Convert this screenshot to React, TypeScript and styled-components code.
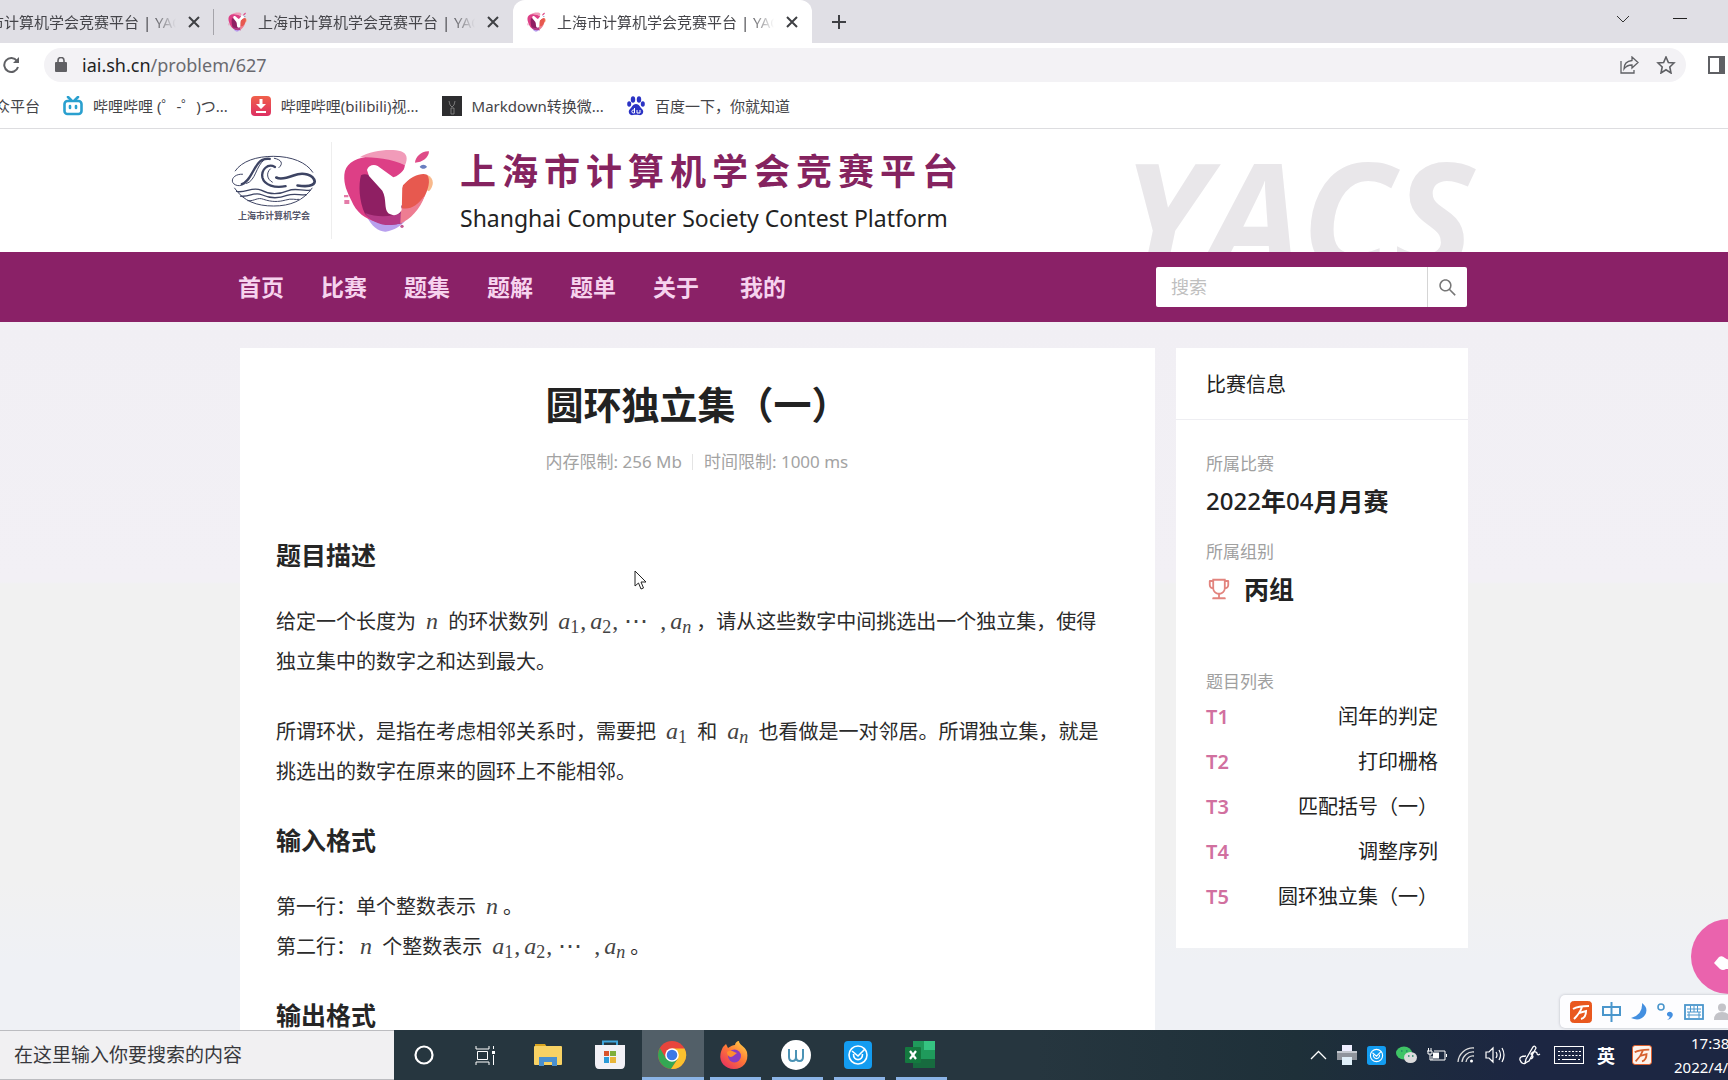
import React from "react";
import styled, { createGlobalStyle, css } from "styled-components";
import { AiOutlineSearch, AiOutlineTrophy } from "react-icons/ai";

const SANS = `"Noto Sans", "Noto Sans CJK SC", sans-serif`;

const GlobalStyle = createGlobalStyle`
  * { box-sizing: border-box; }
  body { margin: 0; background: #f1f0f3; font-family: ${SANS}; color: #262626; overflow: hidden; }
  button { font: inherit; color: inherit; border: 0; padding: 0; background: none; }
  h1, h2, h3, p, dl, dd, ul { margin: 0; padding: 0; }
  a { color: inherit; text-decoration: none; }
  svg { display: block; flex: none; }
`;

const Screen = styled.div`
  height: 100vh;
  display: flex;
  flex-direction: column;
  overflow: hidden;
`;

/* ---------- Browser ---------- */

const TabStrip = styled.div`
  flex: none;
  height: 43px;
  display: flex;
  align-items: stretch;
  background: #e0dfe5;
  overflow: hidden;
`;

const Tabs = styled.div`
  display: flex;
  margin-left: -85px;
`;

const Tab = styled.div<{ $active?: boolean }>`
  width: 299px;
  display: flex;
  align-items: center;
  padding: 0 13px 0 14px;
  border-right: 1px solid transparent;
  ${(p) => p.$active && css`
    background: #fff;
    border-radius: 12px 12px 0 0;
  `}
  &:first-child {
    border-image: linear-gradient(transparent 22%, #a5a4aa 22% 80%, transparent 80%) 1;
  }
`;

const TabTitle = styled.button`
  flex: 1;
  min-width: 0;
  margin: 0 12px 0 11px;
  overflow: hidden;
  white-space: nowrap;
  text-align: left;
  font-size: 15px;
  line-height: 24px;
  color: #45454a;
  mask-image: linear-gradient(90deg, #000 88%, transparent);
`;

const IconButton = styled.button`
  display: flex;
  align-items: center;
  justify-content: center;
  flex: none;
  color: #3f4044;
`;

const NewTab = styled(IconButton)`
  width: 54px;
`;

const WindowControls = styled.div`
  display: flex;
  align-items: center;
  gap: 43px;
  margin-left: auto;
  padding: 0 41px 6px 0;
`;

const Toolbar = styled.div`
  flex: none;
  height: 43px;
  display: flex;
  align-items: center;
  background: #fff;
  padding: 0 3px;
`;

const Omnibox = styled.div`
  flex: 1;
  height: 34px;
  margin: 0 22px 0 24px;
  padding: 0 8px 0 11px;
  display: flex;
  align-items: center;
  gap: 15px;
  border-radius: 17px;
  background: #f3f2f5;
`;

const Address = styled.div`
  flex: 1;
  font-size: 18px;
  line-height: 26px;
  color: #6a6a70;
  b { font-weight: 400; color: #222; }
`;

const Bookmarks = styled.nav`
  flex: none;
  height: 43px;
  display: flex;
  align-items: center;
  gap: 23px;
  padding-bottom: 3px;
  background: #fff;
  border-bottom: 1px solid #dddde0;
  a {
    display: flex;
    align-items: center;
    gap: 10px;
    font-size: 15px;
    line-height: 24px;
    white-space: nowrap;
    color: #444448;
  }
  a:first-child { margin-left: -5px; }
`;

/* ---------- Site ---------- */

const Viewport = styled.div`
  flex: 1;
  min-height: 0;
  overflow: hidden;
`;

const Masthead = styled.header`
  height: 123px;
  padding: 0 254px 0 230px;
  display: flex;
  background: #fff;
  overflow: hidden;
`;

const Society = styled.div`
  align-self: center;
  height: 97px;
  padding: 13px 13px 0 0;
  border-right: 1px solid #eee;
  display: flex;
  flex-direction: column;
  align-items: center;
  span {
    font-family: "Liberation Serif", "Noto Sans CJK SC", serif;
    font-size: 9px;
    font-weight: 700;
    line-height: 16px;
    color: #55566a;
  }
`;

const Emblem = styled.div`
  align-self: center;
  margin: 0 26px 0 10px;
`;

const Brand = styled.div`
  padding-top: 18px;
  white-space: nowrap;
  h1 {
    font-size: 36px;
    line-height: 50px;
    letter-spacing: 6px;
    font-weight: 700;
    color: #85235f;
  }
  p {
    font-size: 23px;
    line-height: 42px;
    color: #222;
  }
`;

const Watermark = styled.div`
  margin-left: auto;
  font-family: "Open Sans", "Noto Sans", sans-serif;
  font-size: 151px;
  line-height: 170px;
  font-style: italic;
  font-weight: 700;
  color: #e9e7ea;
`;

const NavBar = styled.nav`
  height: 70px;
  padding: 0 261px 0 238px;
  display: flex;
  align-items: center;
  background: #8a2167;
`;

const NavLinks = styled.div`
  display: flex;
  gap: 36px;
  a {
    min-width: 47px;
    font-size: 23px;
    line-height: 38px;
    font-weight: 700;
    color: #f6d3ee;
  }
  a:last-child { margin-left: 4px; }
`;

const SearchForm = styled.form`
  margin-left: auto;
  width: 311px;
  height: 40px;
  display: flex;
  border-radius: 2px;
  background: #fff;
  overflow: hidden;
  input {
    flex: 1;
    min-width: 0;
    border: 0;
    padding: 0 15px;
    background: none;
    font: 18px/26px ${SANS};
    outline: 0;
  }
  input::placeholder { color: #bfbfbf; }
  button {
    width: 40px;
    display: flex;
    align-items: center;
    justify-content: center;
    border-left: 1px solid #d5d5d5;
    color: #777;
  }
`;

const Columns = styled.main`
  padding: 26px 260px 0 240px;
  display: flex;
  align-items: flex-start;
  gap: 21px;
  background: linear-gradient(#f1eff4, #f2f0f5 260px, #f1f1f1 262px, #f1f1f1 560px, #eff1f5 640px);
`;

const Problem = styled.article`
  flex: 1;
  min-width: 0;
  padding: 29px 36px 40px;
  background: #fff;
  display: flex;
  flex-direction: column;
  gap: 30px;
`;

const ProblemHead = styled.header`
  align-self: center;
  margin-bottom: 31px;
  h2 {
    font-size: 38px;
    line-height: 54px;
    font-weight: 700;
    color: #222;
  }
`;

const Limits = styled.div`
  margin-top: 17px;
  display: flex;
  align-items: center;
  font-size: 17px;
  line-height: 28px;
  white-space: nowrap;
  color: #a3a3a3;
  span + span {
    margin-left: 10px;
    padding-left: 12px;
    background: linear-gradient(#e4e4e4, #e4e4e4) left center / 1px 16px no-repeat;
  }
`;

const Section = styled.section`
  padding-right: 14px;
  h3 {
    margin-bottom: 29px;
    font-size: 25px;
    line-height: 36px;
    font-weight: 700;
    color: #262626;
  }
  p {
    font-size: 20px;
    line-height: 40px;
    color: #2b2b2b;
  }
  p + p.spaced { margin-top: 30px; }
`;

const Formula = styled.span<{ $tight?: boolean }>`
  margin: 0 5px 0 ${(p) => (p.$tight ? 4 : 10)}px;
  line-height: 30px;
  font-family: "Liberation Serif", serif;
  font-size: 24px;
  color: #444;
  white-space: nowrap;
  sub {
    font-size: 18px;
    line-height: 0;
    vertical-align: -4px;
  }
`;

const Comma = styled.span`
  margin: 0 4px 0 1px;
`;

const Dots = styled.span`
  margin: 0 11px 0 2px;
`;

const SideCard = styled.aside`
  flex: none;
  width: 292px;
  padding-bottom: 29px;
  background: #fff;
  h2 {
    height: 72px;
    padding: 0 30px;
    font-size: 20px;
    line-height: 73px;
    font-weight: 400;
    border-bottom: 1px solid #eeeef2;
    color: #222;
  }
`;

const Facts = styled.dl`
  padding: 31px 30px 0;
  dt {
    font-size: 17px;
    line-height: 26px;
    color: #a0a0a0;
  }
  dd {
    margin: 6px 0 20px;
    display: flex;
    align-items: center;
    font-size: 25px;
    line-height: 36px;
    font-weight: 700;
    color: #222;
  }
  dd svg { margin-right: 12px; color: #e2847e; }
  dd span { font-size: 24px; font-weight: 500; }
`;

const TaskList = styled.section`
  padding: 42px 30px 0;
  h3 {
    font-size: 17px;
    line-height: 25px;
    font-weight: 400;
    color: #a0a0a0;
  }
  ul { list-style: none; }
  li a {
    display: flex;
    justify-content: space-between;
    font-size: 20px;
    line-height: 45px;
    color: #222;
  }
  b { font-weight: 600; color: #d1709f; }
`;

/* ---------- Desktop ---------- */

const Taskbar = styled.footer`
  flex: none;
  height: 50px;
  display: flex;
  background: linear-gradient(90deg, #26363f 60%, #1e3039 75%, #1c2642 88%);
  color: #fff;
`;

const DesktopSearch = styled.input`
  width: 394px;
  padding: 0 0 0 14px;
  border: 1px solid #bcbcc0;
  border-width: 1px 0;
  background: #f1f0f2;
  font: 19px/28px ${SANS};
  outline: 0;
  &::placeholder { color: #38383c; opacity: 1; }
`;

const TaskButton = styled.button<{ $running?: boolean; $front?: boolean }>`
  width: 62px;
  height: 50px;
  padding-right: 2px;
  display: flex;
  align-items: center;
  justify-content: center;
  background:
    linear-gradient(#8bb4e6, #8bb4e6) center bottom / ${(p) => (p.$front ? "100%" : p.$running ? "51px" : "0")} 3px no-repeat,
    ${(p) => (p.$front ? "#525f68" : "transparent")};
`;

const Tray = styled.div`
  margin-left: auto;
  display: flex;
  align-items: center;
  gap: 13px;
  padding-right: 22px;
  font-size: 18px;
  font-weight: 700;
  > span { margin-right: 4px; }
`;

const TrayGroup = styled.div`
  display: flex;
  align-items: center;
  gap: 10px;
`;

const Clock = styled.time`
  width: 54px;
  display: flex;
  flex-direction: column;
  justify-content: center;
  font-size: 15px;
  line-height: 24px;
  white-space: nowrap;
  span:first-child { padding-left: 17px; }
`;

const ImeBar = styled.div`
  position: fixed;
  right: 0;
  bottom: 52px;
  width: 168px;
  height: 33px;
  padding-left: 10px;
  display: flex;
  align-items: center;
  gap: 10px;
  border-radius: 5px 0 0 5px;
  background: #fdfdff;
  box-shadow: 0 0 3px #b9bbc4;
  overflow: hidden;
  color: #4a96cc;
`;

const ChatBubble = styled.button`
  position: fixed;
  right: -38px;
  bottom: 86px;
  width: 75px;
  height: 75px;
  padding-top: 12px;
  display: flex;
  align-items: center;
  justify-content: center;
  border-radius: 50%;
  background: #ea63ad;
`;

const Pointer = styled.div`
  position: fixed;
  left: 634px;
  top: 570px;
`;

/* ---------- Drawings ---------- */

const YacsMark = ({ width, height }: { width: number; height: number }) => (
  <svg width={width} height={height} viewBox="351 10 276 255" preserveAspectRatio="none" aria-hidden="true">
    <path d="M425 215C440 245 460 262 482 261C510 257 525 245 540 230Z" fill="#b9a0ee" />
    <path d="M606 90C626 98 630 120 612 140L590 130Z" fill="#f8b98c" />
    <path d="M358 90C360 60 385 42 425 36C470 34 510 45 540 60C535 90 520 130 500 170L455 232C420 222 395 205 378 165C366 140 356 120 358 90Z" fill="#dd3f86" />
    <path d="M404 38C440 16 500 12 528 20C545 26 550 40 540 62C500 42 450 38 404 38Z" fill="#f19bb9" />
    <path d="M408 92C425 80 450 100 490 130L535 190L530 236C490 246 450 238 420 208C402 170 400 120 408 92Z" fill="#8f1f63" />
    <path d="M420 205C460 220 500 215 530 205L530 236C490 246 448 244 420 205Z" fill="#b43a86" />
    <path d="M532 118C560 95 590 82 606 90C618 105 610 135 596 160C580 190 560 212 530 212Z" fill="#e7594f" />
    <path d="M528 190C555 196 572 188 600 152C585 195 555 225 526 237Z" fill="#ee7d92" />
    <path d="M426 76C430 62 446 58 458 64L505 98C530 90 542 68 548 52L592 74C572 88 550 104 534 122C524 145 528 170 530 196C522 212 506 216 490 206C476 190 486 165 472 138L432 94Z" fill="#fff" />
    <path d="M570 54C570 38 590 18 612 20C612 38 592 54 570 54Z" fill="#df4b88" />
    <path d="M584 66C590 58 600 58 606 66C600 74 590 74 584 66Z" fill="#6a7fc0" />
    <path d="M357 151H370V158H357ZM358 166H373V178H358Z" fill="#e47ba8" />
    <circle cx="531" cy="245" r="5" fill="#c35a92" />
  </svg>
);

const SocietyMark = () => (
  <svg width="88" height="53" viewBox="15 30 264 160" fill="none" stroke="#3d4463" strokeLinecap="round" aria-hidden="true">
    <path d="M30 78C50 48 95 34 145 34C200 34 245 52 264 82" strokeWidth="3" />
    <path d="M52 88C20 86 10 116 36 122C44 124 54 120 60 116M28 130C55 170 95 184 146 184C196 184 236 168 262 130" strokeWidth="3" />
    <path d="M50 118C76 110 84 68 104 50C112 42 126 40 134 42" strokeWidth="7" />
    <path d="M64 116C92 108 92 64 116 46" strokeWidth="3" />
    <path d="M150 66C128 54 108 74 112 98C118 122 150 130 182 124" strokeWidth="7" />
    <path d="M148 40C170 44 176 56 162 68M136 72C122 84 126 104 142 112" strokeWidth="3" />
    <path d="M154 98C168 106 190 98 206 92C236 80 266 90 270 110C268 124 246 126 218 122" strokeWidth="8" />
    <path d="M34 140C62 146 80 124 108 136C134 150 160 150 188 138C214 128 232 140 256 136" strokeWidth="4" />
    <path d="M46 154C74 158 86 140 110 150C136 162 160 162 186 152C208 144 226 152 244 150" strokeWidth="4" />
    <path d="M68 168C90 170 96 156 116 164C140 172 160 172 182 166C200 160 212 166 222 164" strokeWidth="3" />
  </svg>
);

const CloseX = () => (
  <svg width="12" height="12" viewBox="0 0 12 12" stroke="currentColor" strokeWidth="2"><path d="M1 1L11 11M11 1L1 11" /></svg>
);

const BiliIcon = () => (
  <svg width="20" height="20" viewBox="0 0 20 20" fill="none" stroke="#2aa0cf" strokeWidth="2.6" strokeLinecap="round">
    <rect x="1.5" y="5" width="17" height="13" rx="3" /><path d="M5 1L8 4M15 1L12 4M7 10V12M13 10V12" />
  </svg>
);

const DownloadIcon = () => (
  <svg width="20" height="20" viewBox="0 0 20 20">
    <defs><linearGradient id="dl" x2="0" y2="1"><stop stopColor="#f0604a" /><stop offset="1" stopColor="#dd2f62" /></linearGradient></defs>
    <rect width="20" height="20" rx="4" fill="url(#dl)" />
    <path d="M8.500 3H11.500V8H15L10 13L5 8H8.500ZM5 15H15V17H5Z" fill="#fff" />
  </svg>
);

const DeerIcon = () => (
  <svg width="20" height="20" viewBox="0 0 20 20">
    <rect width="20" height="20" fill="#2d2d2f" />
    <path d="M7 5L8 9L10 11L12 9L13 5M9 12H12V18H9Z" stroke="#8d8d8d" strokeWidth="0.800" fill="none" />
  </svg>
);

const BaiduIcon = () => (
  <svg width="18" height="20" viewBox="0 0 18 20" fill="#2b33c4">
    <ellipse cx="6" cy="3.500" rx="2.200" ry="3.200" /><ellipse cx="12" cy="3.500" rx="2.200" ry="3.200" />
    <ellipse cx="2.200" cy="8" rx="2" ry="2.800" /><ellipse cx="15.800" cy="8" rx="2" ry="2.800" />
    <path d="M9 8C12 8 13 11 15 13C18 16 15 20 12 19C10 18.500 8 18.500 6 19C3 20 0 16 3 13C5 11 6 8 9 8Z" />
    <path d="M7.500 12V17H6C4.500 17 4.500 14 6 14H7.500M10 14V17H13V14" fill="none" stroke="#fff" />
  </svg>
);

const ChromeIcon = () => (
  <svg width="30" height="30" viewBox="0 0 30 30">
    <circle cx="15" cy="15" r="14" fill="#e8453c" />
    <path d="M2.900 8A14 14 0 0 0 14 29L21 18.500L9 18.500Z" fill="#34a853" />
    <path d="M27.500 8.500A14 14 0 0 1 14 29L21 18.500L15 8.500Z" fill="#fbc12e" />
    <circle cx="15" cy="15" r="6.800" fill="#fff" /><circle cx="15" cy="15" r="5.300" fill="#3b78e7" />
  </svg>
);

const FirefoxIcon = () => (
  <svg width="30" height="30" viewBox="0 0 30 30">
    <defs><linearGradient id="ff" x1="1" x2=".2" y2="1"><stop stopColor="#ffe04a" /><stop offset=".5" stopColor="#ff7a36" /><stop offset="1" stopColor="#e8305f" /></linearGradient></defs>
    <path d="M4 7L7 4L9 8C12 6 14 5 16 5C16 3 18 1 20 1C20 5 26 6 28 12C30 22 24 29 15 29C6 29 0 22 1.500 14C2 11 3 9 4 7Z" fill="url(#ff)" />
    <circle cx="15.500" cy="16" r="6.500" fill="#8a3cc0" />
    <path d="M8 12C12 9 15 12 18 13C15 15 14 17 11 17C9 16 8 14 8 12Z" fill="#ff8f2e" />
  </svg>
);

const MailMark = ({ size }: { size: number }) => (
  <svg width={size} height={size} viewBox="0 0 28 28" fill="none" stroke="#fff" strokeWidth="1.600">
    <rect width="28" height="28" rx="4" fill="#139cf0" stroke="none" />
    <circle cx="14" cy="14" r="9" /><path d="M8 10L14 15L21 8M9.500 13C9 20.500 19 20.500 18.500 13" />
  </svg>
);

const WanIcon = ({ size, light }: { size: number; light?: boolean }) => (
  <svg width={size} height={size} viewBox="0 0 22 22">
    <rect x="0.500" y="0.500" width="21" height="21" rx="3" fill={light ? "#fdf3ec" : "#e9581f"} stroke="#e9581f" />
    <path d="M3 8C8 5 14 5 19 5M12 6C10 12 7 15 4 18M9 12L16 10C16 14 15 17 11 18" fill="none" stroke={light ? "#d6602e" : "#fff"} strokeWidth="2" />
  </svg>
);

const ImeKeyboard = () => (
  <svg width="20" height="16" viewBox="0 0 20 16" fill="none" stroke="currentColor">
    <rect x="1" y="1" width="18" height="14" strokeWidth="1.800" />
    <path d="M3 5H17M3 8H17M3 11H17M6.500 2V8M10 2V8M13.500 2V8M5 8V14M15 8V14" />
  </svg>
);

const TouchKeyboard = () => (
  <svg width="30" height="18" viewBox="0 0 30 18" fill="none" stroke="#fff">
    <rect x="0.500" y="0.500" width="29" height="17" />
    <path d="M4 5.500H27M4 9.500H27" strokeDasharray="2 1.500" />
    <path d="M4 13.500H6M8 13.500H22M24 13.500H26" />
  </svg>
);

/* ---------- Content ---------- */

const tasks = [
  ["T1", "闰年的判定"],
  ["T2", "打印栅格"],
  ["T3", "匹配括号（一）"],
  ["T4", "调整序列"],
  ["T5", "圆环独立集（一）"],
];

const N = ({ tight }: { tight?: boolean }) => <Formula $tight={tight}><i>n</i></Formula>;
const A = ({ k }: { k: string }) => <><i>a</i><sub>{k === "n" ? <i>n</i> : k}</sub></>;
const Sequence = () => (
  <Formula>
    <A k="1" /><Comma>,</Comma><A k="2" /><Comma>,</Comma><Dots>⋯</Dots><Comma>,</Comma><A k="n" />
  </Formula>
);

export default function App() {
  return (
    <Screen>
      <GlobalStyle />
      <TabStrip>
        <Tabs>
          {[0, 1, 2].map((i) => (
            <Tab key={i} $active={i === 2}>
              <YacsMark width={19} height={20} />
              <TabTitle>上海市计算机学会竞赛平台 | YACS</TabTitle>
              <IconButton aria-label="关闭标签页"><CloseX /></IconButton>
            </Tab>
          ))}
        </Tabs>
        <NewTab aria-label="新标签页">
          <svg width="14" height="14" viewBox="0 0 14 14" stroke="currentColor" strokeWidth="2"><path d="M7 0V14M0 7H14" /></svg>
        </NewTab>
        <WindowControls>
          <IconButton aria-label="搜索标签页">
            <svg width="14" height="8" viewBox="0 0 14 8" fill="none" stroke="#333"><path d="M1 1L7 7L13 1" /></svg>
          </IconButton>
          <IconButton aria-label="最小化">
            <svg width="14" height="2" viewBox="0 0 14 2"><rect width="14" height="1" fill="#222" /></svg>
          </IconButton>
        </WindowControls>
      </TabStrip>

      <Toolbar>
        <IconButton aria-label="重新加载">
          <svg width="17" height="18" viewBox="0 0 17 18" fill="none" stroke="#5f6064" strokeWidth="2"><path d="M14 5A7 7 0 1 0 15 11" /><path d="M16 1V7H10Z" fill="#5f6064" stroke="none" /></svg>
        </IconButton>
        <Omnibox>
          <svg width="12" height="15" viewBox="0 0 12 15"><rect y="5" width="12" height="10" rx="1" fill="#606064" /><path d="M3 6V3.500A3 3 0 0 1 9 3.500V6" fill="none" stroke="#606064" strokeWidth="1.600" /></svg>
          <Address><b>iai.sh.cn</b>/problem/627</Address>
          <IconButton aria-label="分享">
            <svg width="19" height="18" viewBox="0 0 19 18" fill="none" stroke="#5f6064" strokeWidth="1.300"><path d="M1 5V17H14V14M12 1L18 6.500L12 12V9C8 9 6 10 4 13C4 8 7 5 12 4.500Z" /></svg>
          </IconButton>
          <IconButton aria-label="收藏">
            <svg width="24" height="18" viewBox="-3 0 24 18" fill="none" stroke="#5f6064" strokeWidth="1.600"><path d="M9 1L11.400 6.500L17 7L12.800 11L14 17L9 13.800L4 17L5.200 11L1 7L6.600 6.500Z" /></svg>
          </IconButton>
        </Omnibox>
        <IconButton aria-label="侧边栏">
          <svg width="17" height="18" viewBox="0 0 17 18"><rect x="1" y="1" width="15" height="16" fill="#fff" stroke="#5f6064" strokeWidth="2" /><rect x="11" y="1" width="6" height="16" fill="#5f6064" /></svg>
        </IconButton>
      </Toolbar>

      <Bookmarks aria-label="书签">
        <a href="#platform">众平台</a>
        <a href="#bilibili"><BiliIcon />哔哩哔哩 (゜-゜)つ...</a>
        <a href="#video"><DownloadIcon />哔哩哔哩(bilibili)视...</a>
        <a href="#markdown"><DeerIcon />Markdown转换微...</a>
        <a href="#baidu"><BaiduIcon />百度一下，你就知道</a>
      </Bookmarks>

      <Viewport>
        <Masthead>
          <Society><SocietyMark /><span>上海市计算机学会</span></Society>
          <Emblem><YacsMark width={92} height={85} /></Emblem>
          <Brand>
            <h1>上海市计算机学会竞赛平台</h1>
            <p>Shanghai Computer Society Contest Platform</p>
          </Brand>
          <Watermark>YACS</Watermark>
        </Masthead>

        <NavBar>
          <NavLinks>
            {["首页", "比赛", "题集", "题解", "题单", "关于", "我的"].map((t) => (
              <a key={t} href={`#${t}`}>{t}</a>
            ))}
          </NavLinks>
          <SearchForm>
            <input type="text" placeholder="搜索" aria-label="搜索" />
            <button type="button" aria-label="提交搜索"><AiOutlineSearch size={21} /></button>
          </SearchForm>
        </NavBar>

        <Columns>
          <Problem>
            <ProblemHead>
              <h2>圆环独立集（一）</h2>
              <Limits><span>内存限制: 256 Mb</span><span>时间限制: 1000 ms</span></Limits>
            </ProblemHead>
            <Section>
              <h3>题目描述</h3>
              <p>给定一个长度为<N /> 的环状数列<Sequence />，请从这些数字中间挑选出一个独立集，使得独立集中的数字之和达到最大。</p>
              <p className="spaced">所谓环状，是指在考虑相邻关系时，需要把<Formula><A k="1" /></Formula> 和<Formula><A k="n" /></Formula> 也看做是一对邻居。所谓独立集，就是挑选出的数字在原来的圆环上不能相邻。</p>
            </Section>
            <Section>
              <h3>输入格式</h3>
              <p>第一行：单个整数表示<N />。</p>
              <p>第二行：<N tight /> 个整数表示<Sequence />。</p>
            </Section>
            <Section>
              <h3>输出格式</h3>
            </Section>
          </Problem>

          <SideCard>
            <h2>比赛信息</h2>
            <Facts>
              <dt>所属比赛</dt>
              <dd><span>2022</span>年<span>04</span>月月赛</dd>
              <dt>所属组别</dt>
              <dd><AiOutlineTrophy size={26} />丙组</dd>
            </Facts>
            <TaskList>
              <h3>题目列表</h3>
              <ul>
                {tasks.map(([id, name]) => (
                  <li key={id}><a href={`#${id}`}><b>{id}</b>{name}</a></li>
                ))}
              </ul>
            </TaskList>
          </SideCard>
        </Columns>
      </Viewport>

      <Taskbar>
        <DesktopSearch type="text" placeholder="在这里输入你要搜索的内容" aria-label="在这里输入你要搜索的内容" />
        <TaskButton aria-label="Cortana">
          <svg width="20" height="20" viewBox="0 0 20 20"><circle cx="10" cy="10" r="8.500" fill="none" stroke="#fff" strokeWidth="2.200" /></svg>
        </TaskButton>
        <TaskButton aria-label="任务视图">
          <svg width="22" height="19" viewBox="0 0 22 19" fill="none" stroke="#fff"><path d="M1 0V3H14V0M1 19V16H14V19M2.500 5.500H12.500V13.500H2.500ZM18.500 0V3M18.500 9V19" /><rect x="17" y="5" width="3" height="3" fill="#fff" stroke="none" /></svg>
        </TaskButton>
        <TaskButton aria-label="文件资源管理器">
          <svg width="28" height="24" viewBox="0 0 28 24"><path d="M1 1H11L13 4H1Z" fill="#d9a520" /><rect x="0" y="3" width="28" height="19" rx="1" fill="#f8d264" /><path d="M5 23V14H23V23H18V19H10V23Z" fill="#4a90cf" /></svg>
        </TaskButton>
        <TaskButton aria-label="应用商店">
          <svg width="30" height="30" viewBox="0 0 30 30"><path d="M8 6V1.500H22V6" fill="none" stroke="#3fa5dc" strokeWidth="2" /><path d="M0 5H30V24Q30 29 26 29H4Q0 29 0 24Z" fill="#f2f1f6" /><path d="M9 11H14V16H9Z" fill="#d9532c" /><path d="M15 11H21V16H15Z" fill="#7fae3a" /><path d="M9 17H14V23H9Z" fill="#2c9bd8" /><path d="M15 17H21V23H15Z" fill="#e8b53a" /></svg>
        </TaskButton>
        <TaskButton $running $front aria-label="Chrome"><ChromeIcon /></TaskButton>
        <TaskButton $running aria-label="Firefox"><FirefoxIcon /></TaskButton>
        <TaskButton $running aria-label="会议">
          <svg width="30" height="30" viewBox="0 0 30 30"><circle cx="15" cy="15" r="15" fill="#fff" /><path d="M8 9V17Q8 21 11.500 21Q15 21 15 17V10V17Q15 21 18.500 21Q22 21 22 17V9" fill="none" stroke="#4b93b5" strokeWidth="2" /></svg>
        </TaskButton>
        <TaskButton $running aria-label="邮件"><MailMark size={28} /></TaskButton>
        <TaskButton $running aria-label="Excel">
          <svg width="30" height="28" viewBox="0 0 30 28"><path d="M8 0H30V27H8Z" fill="#1f9a5b" /><path d="M19 0H30V9H19Z" fill="#35c481" /><path d="M8 18H30V27H8Z" fill="#176b3f" /><rect y="6" width="16" height="16" rx="1" fill="#14793f" /><path d="M5 10L11 18M11 10L5 18" stroke="#fff" strokeWidth="2.200" /></svg>
        </TaskButton>

        <Tray>
          <TrayGroup>
            <svg width="17" height="10" viewBox="0 0 17 10" fill="none" stroke="#fff" strokeWidth="1.300"><path d="M1 9L8.500 1.500L16 9" /></svg>
            <svg width="20" height="20" viewBox="0 0 20 20"><path d="M5 0H15V6H5Z" fill="#eef" /><path d="M0 6H20V15H0Z" fill="#8f949c" /><path d="M0 6H20V8H0Z" fill="#c4c8cf" /><path d="M5 12H15V20H5Z" fill="#dfeef8" /></svg>
            <MailMark size={19} />
            <svg width="21" height="18" viewBox="0 0 21 18"><ellipse cx="8" cy="7" rx="8" ry="6.500" fill="#3fc466" /><ellipse cx="14.500" cy="11.500" rx="6.500" ry="5.500" fill="#dcdcdc" /><path d="M5 5h1.500M10 5h1.500M12 10h1.500M16 10h1.500" stroke="#286" strokeWidth="1.500" /></svg>
            <svg width="20" height="16" viewBox="0 0 20 16" fill="none" stroke="#fff"><path d="M7 4H18V13H5V9M19.500 7V10M0 4H5V7H1V4M1.500 4V1M4 4V1M3 7V13H5" /><rect x="6" y="5.500" width="6" height="6" fill="#fff" stroke="none" /></svg>
            <svg width="18" height="18" viewBox="0 0 18 18" fill="none" stroke="#ddd" strokeWidth="1.300"><path d="M1 16A15 15 0 0 1 17 2M5 16A11 11 0 0 1 17 6M9 16A7 7 0 0 1 17 10" /><circle cx="14.500" cy="15" r="1.500" fill="#fff" stroke="none" /></svg>
            <svg width="21" height="18" viewBox="0 0 21 18" fill="none" stroke="#fff" strokeWidth="1.200"><path d="M1 6H4L8 2V16L4 12H1ZM11 6Q13 9 11 12M14 4Q17 9 14 14M17 2Q21 9 17 16" /></svg>
          </TrayGroup>
          <svg width="22" height="20" viewBox="0 0 22 20" fill="none" stroke="#fff" strokeWidth="1.300"><path d="M7 14L14 2Q16 0 17 3L10 16L6 18ZM7 11Q0 11 1 15Q3 20 7 18M12 14Q16 12 12 9Q15 5 18 8Q18 11 21 9" /></svg>
          <TouchKeyboard />
          <span>英</span>
          <WanIcon size={20} light />
        </Tray>
        <Clock><span>17:38</span><span>2022/4/</span></Clock>
      </Taskbar>

      <ChatBubble aria-label="客服">
        <svg width="30" height="16" viewBox="0 0 30 16"><path d="M0 8L5 2Q8 0 11 3Q15 6 19 3Q22 0 25 2L30 8L24 14Q21 16 18 14H12Q9 16 6 14Z" fill="#fff" /></svg>
      </ChatBubble>
      <ImeBar>
        <WanIcon size={22} />
        <svg width="19" height="20" viewBox="0 0 19 20" fill="none" stroke="currentColor" strokeWidth="2"><path d="M1 5H18V13H1ZM9.500 0V20" /></svg>
        <svg width="16" height="17" viewBox="0 0 16 17"><path d="M11 0Q18 5 14 12Q9 19 0 15Q12 12 11 0Z" fill="#438fe0" /></svg>
        <svg width="17" height="17" viewBox="0 0 17 17"><circle cx="4" cy="4" r="3" fill="none" stroke="#4a96cc" strokeWidth="1.600" /><path d="M10 17Q13 15 12.500 13.500Q9.500 13 10 10.500Q11 8 14 9Q17 10.500 15 14Q13.500 16.500 10 17Z" fill="#438fe0" /></svg>
        <ImeKeyboard />
        <svg width="16" height="18" viewBox="0 0 16 18" fill="#c3c3c8"><circle cx="8" cy="4.500" r="4" /><path d="M0 17Q0 9 8 9Q16 9 16 17Z" /></svg>
      </ImeBar>
      <Pointer>
        <svg width="13" height="20" viewBox="0 0 13 20"><path d="M1 1V16L4.500 13L7 19L9.500 18L7 12H12Z" fill="#fff" stroke="#222" /></svg>
      </Pointer>
    </Screen>
  );
}
